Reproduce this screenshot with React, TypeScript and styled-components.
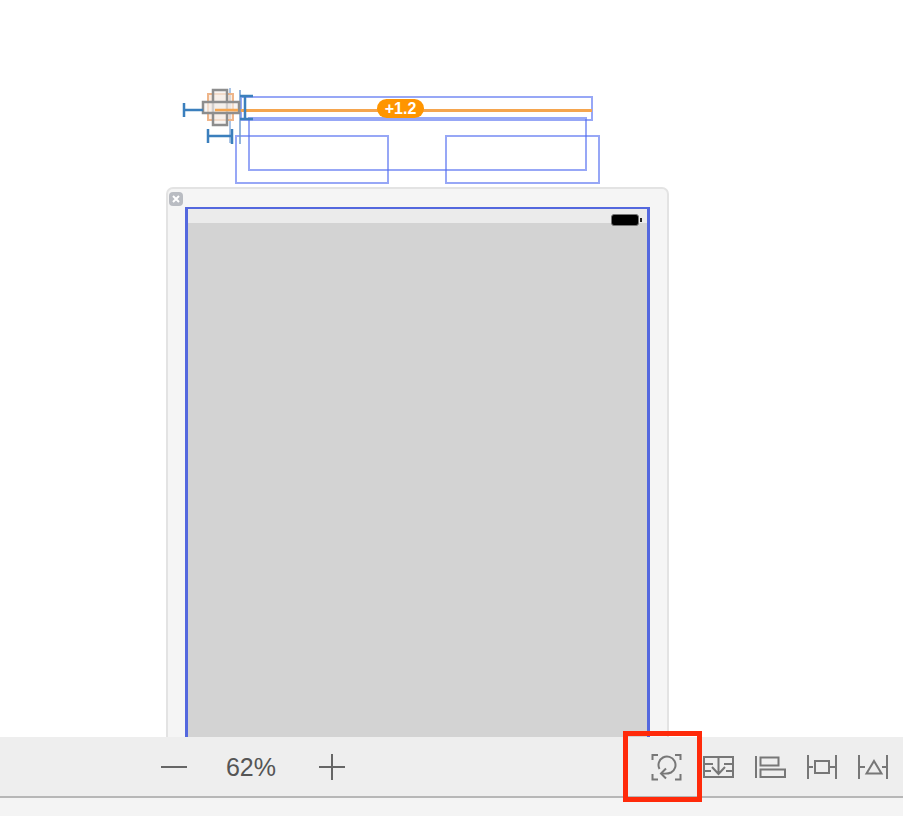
import React from "react";
import styled, { createGlobalStyle } from "styled-components";

const GlobalStyles = createGlobalStyle`
  html, body, #root {
    margin: 0;
    padding: 0;
    height: 100%;
    width: 100%;
  }
  body {
    font-family: "Liberation Sans", Arial, sans-serif;
    background: #fff;
    overflow: hidden;
  }
`;

export default function App() {
  return (
    <>
      <GlobalStyles />
      <Page>
        <Canvas>
          <Constraints />
          <DeviceWindow />
        </Canvas>
        <Toolbar />
        <StatusStrip />
      </Page>
    </>
  );
}

const Page = styled.div`
  position: relative;
  display: flex;
  flex-direction: column;
  height: 816px;
  width: 903px;
`;

const Canvas = styled.div`
  position: relative;
  height: 737px;
  overflow: hidden;
  background: #fff;
`;

/* things on the free canvas */

const Outline = styled.div<{ $x: number; $y: number; $w: number; $h: number }>`
  position: absolute;
  left: ${(p) => p.$x}px;
  top: ${(p) => p.$y}px;
  width: ${(p) => p.$w}px;
  height: ${(p) => p.$h}px;
  box-sizing: border-box;
  border: 2px solid rgba(82, 108, 240, 0.6);
`;

const GuideLine = styled.div`
  position: absolute;
  left: 215px;
  top: 109px;
  width: 377px;
  height: 3px;
  background: #f5a54e;
`;

const Badge = styled.div`
  position: absolute;
  left: 377px;
  top: 99px;
  width: 47px;
  height: 19px;
  border-radius: 10px;
  background: #ff9500;
  color: #fff;
  font-size: 16px;
  font-weight: 700;
  line-height: 19px;
  text-align: center;
`;

const HandleArt = styled.svg`
  position: absolute;
  left: 180px;
  top: 85px;
`;

function Constraints() {
  return (
    <>
      <Outline $x={240} $y={96} $w={353} $h={25} />
      <Outline $x={248} $y={117} $w={339} $h={54} />
      <Outline $x={235} $y={135} $w={154} $h={49} />
      <Outline $x={445} $y={135} $w={155} $h={49} />
      <GuideLine />
      <Badge>+1.2</Badge>
      <HandleArt width="80" height="62" viewBox="0 0 80 62">
        <path d="M50 3V58" stroke="#8fb2de" strokeWidth="1.5" fill="none" />
        <path d="M60 5V59" stroke="#6f9bd0" strokeWidth="1.5" fill="none" />
        <rect x="28" y="9" width="25" height="26" fill="rgba(250,225,205,0.6)" stroke="#eeb58a" strokeWidth="2" />
        <rect x="33" y="5" width="14" height="35" fill="rgba(245,240,236,0.65)" stroke="#8d8d8d" strokeWidth="2.5" />
        <rect x="23" y="17" width="36" height="11" fill="rgba(245,240,236,0.65)" stroke="#8d8d8d" strokeWidth="2.5" />
        <path d="M35 25H58" stroke="#f5a54e" strokeWidth="2.5" fill="none" />
        <path d="M4 25H23M4 18V32" stroke="#3b7fbd" strokeWidth="2.5" fill="none" />
        <path d="M28 51H52M28 44V58M52 44V59" stroke="#3b7fbd" strokeWidth="2.5" fill="none" />
        <path d="M65 11V34M60 11H73M60 34H73" stroke="#3b7fbd" strokeWidth="2.5" fill="none" />
      </HandleArt>
    </>
  );
}

/* device window */

const WindowFrame = styled.div`
  position: absolute;
  left: 166px;
  top: 187px;
  width: 503px;
  height: 640px;
  box-sizing: border-box;
  padding: 18px 17px 0 17px;
  background: #f5f5f5;
  border: 2px solid #e3e3e3;
  border-radius: 7px;
`;

const CloseButton = styled.div`
  position: absolute;
  left: 1px;
  top: 3px;
  width: 14px;
  height: 14px;
  display: flex;
  align-items: center;
  justify-content: center;
  border-radius: 4px;
  background: #b9bcc2;
`;

const Screen = styled.div`
  height: 100%;
  box-sizing: border-box;
  display: flex;
  flex-direction: column;
  border: 3px solid #5468de;
  border-top-width: 2px;
  background: #d3d3d3;
`;

const StatusBar = styled.div`
  height: 14px;
  flex: none;
  display: flex;
  align-items: flex-start;
  justify-content: flex-end;
  padding: 5px 8px 0 0;
  box-sizing: border-box;
  background: #ebebeb;
`;

const Battery = styled.div`
  position: relative;
  width: 28px;
  height: 12px;
  box-sizing: border-box;
  border: 1px solid #777;
  border-radius: 3px;
  background: #000;
  &::after {
    content: "";
    position: absolute;
    right: -4px;
    top: 3px;
    width: 2px;
    height: 4px;
    background: #222;
  }
`;

function DeviceWindow() {
  return (
    <WindowFrame>
      <CloseButton>
        <svg width="8" height="8" viewBox="0 0 8 8">
          <path d="M1 1L7 7M7 1L1 7" stroke="#fff" strokeWidth="2" />
        </svg>
      </CloseButton>
      <Screen>
        <StatusBar>
          <Battery />
        </StatusBar>
      </Screen>
    </WindowFrame>
  );
}

/* bottom bar */

const Bar = styled.div`
  height: 59px;
  flex: none;
  box-sizing: border-box;
  display: flex;
  align-items: center;
  padding-left: 161px;
  background: #eeeeee;
`;

const ZoomGroup = styled.div`
  display: flex;
  align-items: center;
  width: 184px;
  justify-content: space-between;
`;

const ZoomValue = styled.span`
  margin-right: 4px;
  font-size: 25px;
  line-height: 30px;
  color: #555;
`;

const ToolIcons = styled.div`
  display: flex;
  align-items: center;
  margin-left: 306px;
  gap: 21px;
`;

const ToolIcon = styled.svg`
  display: block;
  fill: none;
  stroke: #777;
  stroke-width: 2;
`;

const ZoomIcon = styled(ToolIcon)`
  stroke: #666;
`;

const Highlight = styled.div`
  position: absolute;
  left: 623px;
  top: 731px;
  width: 79px;
  height: 71px;
  box-sizing: border-box;
  border: 5px solid #ff2a0a;
`;

const StatusStrip = styled.div`
  flex: 1;
  border-top: 2px solid #b7b7b7;
  background: #f4f4f4;
`;

function Toolbar() {
  return (
    <>
      <Bar>
        <ZoomGroup>
          <ZoomIcon width="26" height="26" viewBox="0 0 26 26">
            <path d="M0 13H26" />
          </ZoomIcon>
          <ZoomValue>62%</ZoomValue>
          <ZoomIcon width="26" height="26" viewBox="0 0 26 26">
            <path d="M0 13H26M13 0V26" />
          </ZoomIcon>
        </ZoomGroup>
        <ToolIcons>
          <ToolIcon width="31" height="28" viewBox="0 0 31 28">
            <path d="M7 2H1.5V7M24 2H29.5V7M1.5 21V26.5H7M29.5 21V26.5H24" />
            <path d="M8.5 16A8.5 8.5 0 1 1 20 19.5Q17 21 11 20.5" />
            <path d="M15 15.5L10 20.5L15 25.5" />
          </ToolIcon>
          <ToolIcon width="31" height="22" viewBox="0 0 31 22">
            <rect x="1" y="1" width="29" height="20" />
            <path d="M1 8H10M21 8H30M1 15H8M23 15H30" />
            <path d="M15.5 1V18M9 11L15.5 18L22 11" />
          </ToolIcon>
          <ToolIcon width="31" height="22" viewBox="0 0 31 22">
            <path d="M1 0V22" />
            <rect x="5.5" y="1.5" width="18" height="8" />
            <rect x="5.5" y="13.5" width="24.5" height="7.5" />
          </ToolIcon>
          <ToolIcon width="30" height="24" viewBox="0 0 30 24">
            <path d="M1 0V24M29 0V24M1 12H6M22 12H29" />
            <rect x="8" y="6" width="14" height="12" />
          </ToolIcon>
          <ToolIcon width="30" height="24" viewBox="0 0 30 24">
            <path d="M1 0V24M29 0V24M1 12H7M24 12H29" />
            <path d="M16 6L23.5 18.5H8.5Z" />
          </ToolIcon>
        </ToolIcons>
      </Bar>
      <Highlight />
    </>
  );
}
